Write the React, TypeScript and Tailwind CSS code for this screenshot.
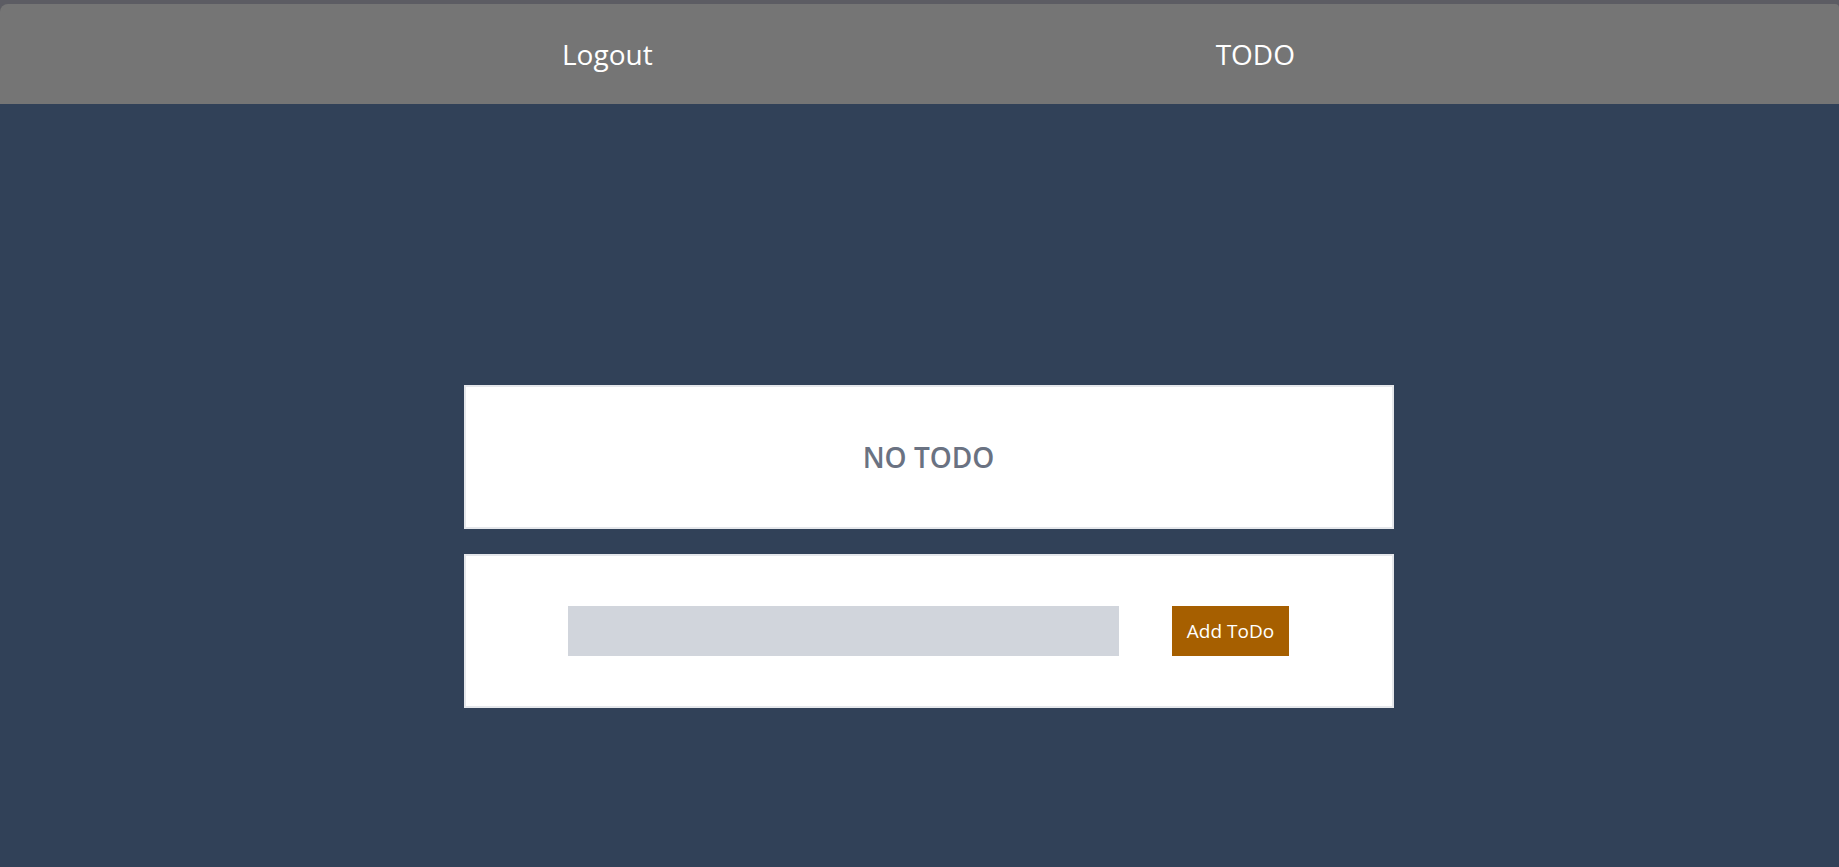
import React, { useState } from 'react';

const font = { fontFamily: '"Open Sans", "Noto Sans", sans-serif' };

const Header: React.FC = () => (
  <div className="bg-[#5c5c63] pt-[4px]">
    <nav className="h-[100px] bg-[#757575] rounded-tl-[8px] rounded-tr-[4px] flex items-center pl-[562px] gap-[563px] text-[28px] text-white">
      <button className="leading-none">Logout</button>
      <span className="leading-none">TODO</span>
    </nav>
  </div>
);

const App: React.FC = () => {
  const [text, setText] = useState('');

  return (
    <div className="min-h-screen bg-slate-700" style={font}>
      <Header />
      <main className="flex flex-col items-center pt-[281px] pl-[18px] gap-[25px]">
        <div className="w-[930px] h-[144px] bg-white border-2 border-gray-200 flex items-center justify-center">
          <h2 className="text-[28px] font-semibold text-gray-500">NO TODO</h2>
        </div>
        <div className="w-[930px] h-[154px] bg-white border-2 border-gray-200 flex items-center justify-center gap-[53px]">
          <input
            value={text}
            onChange={(e) => setText(e.target.value)}
            className="w-[551px] h-[50px] bg-gray-300 px-3 outline-none"
          />
          <button className="w-[117px] h-[50px] bg-yellow-700 text-white text-[19px]">Add ToDo</button>
        </div>
      </main>
    </div>
  );
};

export default App;
